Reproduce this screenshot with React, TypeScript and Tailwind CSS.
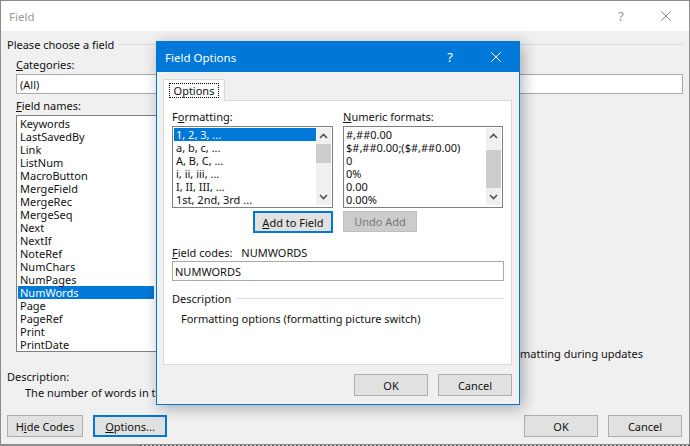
import React from "react";

const F = "font-['Noto_Sans','Open_Sans',sans-serif]";

const fields = ["Keywords","LastSavedBy","Link","ListNum","MacroButton","MergeField","MergeRec","MergeSeq","Next","NextIf","NoteRef","NumChars","NumPages","NumWords","Page","PageRef","Print","PrintDate"];
const formats = ["1, 2, 3, ...","a, b, c, ...","A, B, C, ...","i, ii, iii, ...","I, II, III, ...","1st, 2nd, 3rd ..."];
const numeric = ["#,##0.00","$#,##0.00;($#,##0.00)","0","0%","0.00","0.00%"];

function X({ c }: { c: string }) {
  return (
    <svg className="block" width="10" height="10" viewBox="0 0 10 10" fill="none" stroke={c} strokeWidth="1"><path d="M0.3 0.3 9.7 9.7M9.7 0.3 0.3 9.7" /></svg>
  );
}

function Btn({ children, className = "h-[22px] w-[74px] bg-[#e1e1e1] border border-[#adadad] text-[#111]" }: { children: React.ReactNode; className?: string }) {
  return (
    <div className={`flex items-center justify-center leading-none ${className}`}>{children}</div>
  );
}

function Scroll({ top, h }: { top: number; h: number }) {
  return (
    <div className="w-[15px] h-[77px] bg-[#f0f0f0] flex flex-col items-center shrink-0">
      <svg className="mt-[5px] shrink-0" width="9" height="6" viewBox="0 0 9 6" fill="none" stroke="#505050" strokeWidth="1.6"><path d="M1 5 4.5 1.5 8 5" /></svg>
      <div className="w-full bg-[#cdcdcd] shrink-0" style={{ marginTop: top, height: h }} />
      <svg className="mt-auto mb-[5px] shrink-0" width="9" height="6" viewBox="0 0 9 6" fill="none" stroke="#505050" strokeWidth="1.6"><path d="M1 1 4.5 4.5 8 1" /></svg>
    </div>
  );
}

export default function App() {
  return (
    <div className={`${F} relative w-[690px] h-[446px] overflow-hidden bg-[#8c8c8c] text-[11px] leading-[13px] text-[#111]`}>
      {/* Field window */}
      <div className="w-[688px] h-[443px] mt-[1px] ml-[1px] flex flex-col bg-[#f0f0f0]">
        <div className="h-[30px] bg-white flex items-center shrink-0 text-[#999]">
          <span className="ml-[8px] text-[11.5px]">Field</span>
          <span className="ml-auto mr-[37px] text-[13px] text-[#999]">?</span>
          <span className="mr-[18px]"><X c="#8a8a8a" /></span>
        </div>
        <div className="flex-1 px-[6px] pt-[7px] flex flex-col relative">
          <div className="flex items-center h-[13px]">
            <span>Please choose a field</span>
            <div className="flex-1 h-px bg-[#dcdcdc] ml-[5px]" />
          </div>
          <div className="pl-[9px]">
            <div className="mt-[7px] h-[13px]"><u>C</u>ategories:</div>
            <div className="mt-[3px] h-[20px] w-[667px] bg-white border border-[#a9a9a9] flex items-center pl-[3px]">(All)</div>
            <div className="mt-[5px] h-[13px]"><u>F</u>ield names:</div>
            <div className="mt-[3px] w-[160px] h-[237px] bg-white border border-[#808080] pt-[1px] pl-[1px]">
              {fields.map((f) => (
                <div key={f} className={`h-[13px] pl-[2px] flex items-center w-[136px] ${f === "NumWords" ? "bg-[#0078d7] text-white" : ""}`}>{f}</div>
              ))}
            </div>
          </div>
          <div className="absolute left-[519px] top-[316px] whitespace-nowrap">matting during updates</div>
          <div className="mt-[18px] h-[13px]">Description:</div>
          <div className="mt-[3px] ml-[18px] h-[13px]">The number of words in the document</div>
          <div className="mt-[16px] flex">
            <Btn className="w-[76px] h-[22px] bg-[#e1e1e1] border border-[#adadad]"><span>H<u>i</u>de Codes</span></Btn>
            <Btn className="ml-[10px] w-[74px] h-[22px] bg-[#e1e1e1] border-2 border-[#0078d7]"><span><u>O</u>ptions...</span></Btn>
            <Btn className="ml-auto w-[74px] h-[22px] bg-[#e1e1e1] border border-[#adadad]">OK</Btn>
            <Btn className="ml-[10px] mr-[1px] w-[74px] h-[22px] bg-[#e1e1e1] border border-[#adadad]">Cancel</Btn>
          </div>
        </div>
      </div>
      <div className="mt-[1px] h-px ml-[140px] bg-[repeating-linear-gradient(90deg,#555_0_2px,#ddd_2px_4px)]" />

      {/* Field Options dialog */}
      <div className="absolute left-[156px] top-[41px] w-[364px] h-[364px] border border-[#0078d7] bg-[#f0f0f0] flex flex-col shadow-[3px_3px_14px_rgba(0,0,0,0.3)]">
        <div className="h-[30px] bg-[#0078d7] text-white flex items-center shrink-0">
          <span className="ml-[8px] text-[11.5px]">Field Options</span>
          <span className="ml-auto mr-[38px] text-[13px]">?</span>
          <span className="mr-[18px]"><X c="#ffffff" /></span>
        </div>
        <div className="px-[6px] pt-[7px] flex-1 flex flex-col">
          <div className="w-[62px] h-[22px] bg-white border border-b-0 border-[#d9d9d9] relative z-10 mb-[-1px] flex items-center justify-center">
            <span className="border border-dotted border-black px-[4px] h-[15px] flex items-center">Options</span>
          </div>
          <div className="w-[349px] h-[265px] bg-white border border-[#d9d9d9] pl-[8px] pr-[7px] pt-[9px]">
            <div className="flex">
              <div className="w-[161px] mr-[10px]">
                <div className="h-[13px]">F<u>o</u>rmatting:</div>
                <div className="mt-[3px] h-[82px] border border-[#808080] flex p-[1px]">
                  <div className="flex-1">
                    {formats.map((f, i) => (
                      <div key={f} className={`h-[13px] pl-[2px] flex items-center ${i === 0 ? "bg-[#0078d7] text-white" : ""}`}>{f}</div>
                    ))}
                  </div>
                  <Scroll top={5} h={19} />
                </div>
              </div>
              <div className="w-[160px]">
                <div className="h-[13px]"><u>N</u>umeric formats:</div>
                <div className="mt-[3px] h-[82px] border border-[#808080] flex p-[1px]">
                  <div className="flex-1">
                    {numeric.map((f) => (
                      <div key={f} className="h-[13px] pl-[1px] flex items-center whitespace-nowrap">{f}</div>
                    ))}
                  </div>
                  <Scroll top={11} h={38} />
                </div>
              </div>
            </div>
            <div className="flex mt-[3px]">
              <Btn className="ml-[81px] w-[80px] h-[22px] bg-[#e1e1e1] border-2 border-[#0078d7]"><span><u>A</u>dd to Field</span></Btn>
              <Btn className="ml-[10px] w-[74px] h-[21px] bg-[#cccccc] border border-[#bfbfbf] text-[#787878]">Undo Add</Btn>
            </div>
            <div className="flex mt-[13px] h-[13px]">
              <span><u>F</u>ield codes:</span>
              <span className="ml-[9px]">NUMWORDS</span>
            </div>
            <div className="mt-[2px] w-[332px] h-[20px] border border-[#a9a9a9] flex items-center pl-[2px]">NUMWORDS</div>
            <div className="flex items-center mt-[11px] h-[13px]">
              <span>Description</span>
              <div className="flex-1 h-px bg-[#dcdcdc] ml-[5px]" />
            </div>
            <div className="mt-[7px] ml-[9px] h-[13px]">Formatting options (formatting picture switch)</div>
          </div>
          <div className="flex justify-end mt-[9px] pr-[1px]">
            <Btn>OK</Btn>
            <Btn className="ml-[10px] h-[22px] w-[74px] bg-[#e1e1e1] border border-[#adadad] text-[#111]">Cancel</Btn>
          </div>
        </div>
      </div>
    </div>
  );
}
